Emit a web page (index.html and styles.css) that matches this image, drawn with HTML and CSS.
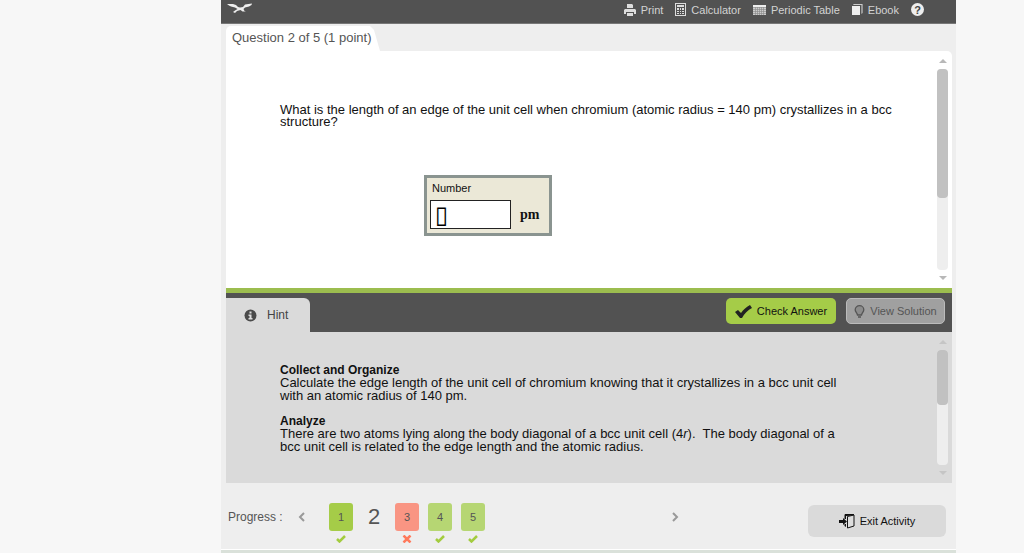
FILE: index.html
```
<!DOCTYPE html>
<html lang="en">
<head>
  <meta charset="UTF-8">
  <title>Question 2 of 5</title>
  <meta name="viewport" content="width=device-width, initial-scale=1">
  <link rel="stylesheet" href="styles.css">
</head>
<body>
  <div class="app">
    <header class="topbar">
      <svg class="logo" width="26" height="10" viewBox="0 0 26 10"><path fill="#eee" d="M0 1 L6 1 L9 2 L11 4 L13 4.500 L16 4 L18 1.500 L25 .5 L24.500 2 L22 3.500 L18 4.500 L16.500 6 L17.500 8 L19 8.500 L15.500 8.500 L13.500 7 L10 8 L8 10 L6 9 L8 7.500 L10.500 6 L8 4.500 L4 3.500 L2 2.500 Z"/></svg>
      <nav class="tools">
        <a href="#">
          <svg width="12" height="12" viewBox="0 0 12 12"><path fill="#ddd" d="M3 0h5l1 1v3H3z M0 6l1-1h10l1 1v4h-2V8H2v2H0z M3 9h6v3H3z"/></svg>
          Print
        </a>
        <a href="#">
          <svg width="11" height="13" viewBox="0 0 11 13"><rect x=".5" y=".5" width="10" height="12" fill="#525252" stroke="#ddd"/><path fill="#ddd" d="M2 2h7v2H2z M2 5h2v2H2z M5 5h1v2H5z M7 5h2v2H7z M2 8h2v1H2z M5 8h1v1H5z M7 8h2v1H7z M2 10h2v1H2z M5 10h1v1H5z M7 10h2v1H7z"/></svg>
          Calculator
        </a>
        <a href="#">
          <svg width="13" height="10" viewBox="0 0 13 10"><rect width="13" height="10" fill="#ccc"/><path fill="#eee" d="M0 0h13v2H0z"/><path stroke="#888" fill="none" stroke-width=".6" d="M0 2.500h13M0 4.500h13M0 6.500h13M0 8.500h13M2.500 2v8M4.500 2v8M6.500 2v8M8.500 2v8M10.500 2v8"/></svg>
          Periodic Table
        </a>
        <a href="#">
          <svg width="11" height="11" viewBox="0 0 11 11"><path fill="#999" d="M1 1l1-1h9v9l-2 1V1z"/><path fill="#eee" d="M0 2h8v9H0z"/><path fill="#ccc" d="M1 1l1-1h8v1z"/></svg>
          Ebook
        </a>
        <a href="#" class="help" aria-label="Help">?</a>
      </nav>
    </header>

    <main>
      <h1 class="question-tab">Question 2 of 5 (1 point)</h1>

      <section class="panel question">
        <div class="question-body">
          <p>What is the length of an edge of the unit cell when chromium (atomic radius = 140 pm) crystallizes in a bcc structure?</p>
          <div class="answer">
            <label for="answer">Number</label>
            <div class="answer-row">
              <input type="text" id="answer" value="&#9647;">
              <span class="unit">pm</span>
            </div>
          </div>
        </div>
        <div class="scroll">
          <span class="arrow up"></span>
          <div class="track"><div class="thumb"></div></div>
          <span class="arrow down"></span>
        </div>
      </section>

      <div class="actions">
        <button type="button" class="hint-tab">
          <svg width="13" height="13" viewBox="0 0 13 13"><circle cx="6.500" cy="6.500" r="6" fill="#4a4a4a"/><path fill="#ddd" d="M5.500 2.500h2v2h-2z M4.500 5.500h3v3.500h1v1.500h-4V9h1V7h-1z"/></svg>
          Hint
        </button>
        <div class="action-buttons">
          <button type="button" class="btn check">
            <svg width="17" height="13" viewBox="0 0 17 13"><path fill="#222" d="M0 7l3-2 3 3c2-3 5-6 9-8l2 3C13 5 9 9 7 13H5z"/></svg>
            Check Answer
          </button>
          <button type="button" class="btn view">
            <svg width="11" height="13" viewBox="0 0 11 13"><path fill="#8c8c8c" stroke="#555" stroke-width="1.300" d="M5.500 .7a4.300 4 0 0 0-4.300 4c0 2 1.800 3 2.300 5.300h4c.5-2.300 2.300-3.300 2.300-5.300a4.300 4 0 0 0-4.300-4z"/><path stroke="#555" stroke-width="1.500" d="M4 12h3"/></svg>
            View Solution
          </button>
        </div>
      </div>

      <section class="panel hint">
        <div class="hint-body">
          <h2>Collect and Organize</h2>
          <p>Calculate the edge length of the unit cell of chromium knowing that it crystallizes in a bcc unit cell with an atomic radius of 140 pm.</p>
          <h2>Analyze</h2>
          <p>There are two atoms lying along the body diagonal of a bcc unit cell (4<i>r</i>).&nbsp; The body diagonal of a bcc unit cell is related to the edge length and the atomic radius.</p>
        </div>
        <div class="scroll">
          <span class="arrow up"></span>
          <div class="track"><div class="thumb"></div></div>
          <span class="arrow down"></span>
        </div>
      </section>
    </main>

    <footer class="footer">
      <span class="progress-label">Progress :</span>
      <button type="button" class="nav-arrow" aria-label="Previous"><svg width="8" height="10" viewBox="0 0 8 10"><path d="M6 1L2 5l4 4" fill="none" stroke="#999" stroke-width="2"/></svg></button>
      <ol class="steps">
        <li>
          <a href="#" class="step done">1</a>
          <svg width="10" height="8" viewBox="0 0 10 8"><path d="M1 4l2.500 2.500L9 1" fill="none" stroke="#a3cc3f" stroke-width="2.500"/></svg>
        </li>
        <li><span class="step current">2</span></li>
        <li>
          <a href="#" class="step wrong">3</a>
          <svg width="10" height="8" viewBox="0 0 10 8"><path d="M1.500 .5l7 7M8.500 .5l-7 7" fill="none" stroke="#ff7a5c" stroke-width="2.500"/></svg>
        </li>
        <li>
          <a href="#" class="step right">4</a>
          <svg width="10" height="8" viewBox="0 0 10 8"><path d="M1 4l2.500 2.500L9 1" fill="none" stroke="#a3cc3f" stroke-width="2.500"/></svg>
        </li>
        <li>
          <a href="#" class="step right">5</a>
          <svg width="10" height="8" viewBox="0 0 10 8"><path d="M1 4l2.500 2.500L9 1" fill="none" stroke="#a3cc3f" stroke-width="2.500"/></svg>
        </li>
      </ol>
      <button type="button" class="nav-arrow next" aria-label="Next"><svg width="8" height="10" viewBox="0 0 8 10"><path d="M2 1l4 4-4 4" fill="none" stroke="#999" stroke-width="2"/></svg></button>
      <button type="button" class="exit">
        <svg width="16" height="15" viewBox="0 0 16 15"><path fill="#111" d="M0 6h4V4l4 3.500-4 3.500V9H0z M6 0h9v1.500l-8 .5V5H5.500V1z M5.500 10H7v3l-1.500-1z"/><path fill="#ddd" stroke="#111" d="M8.500 2.500l6.500-1.500v11l-6.500 2z"/></svg>
        Exit Activity
      </button>
    </footer>
  </div>
</body>
</html>
```
FILE: styles.css
```
* { box-sizing: border-box; }
body {
  margin: 0;
  padding: 0 68px 0 221px;
  background: #f7f7f7;
  font-family: "Liberation Sans", Arial, sans-serif;
  font-size: 13px;
  color: #111;
}
button { font-family: inherit; border: none; cursor: pointer; }
a { color: inherit; text-decoration: none; }
svg { flex: none; }
p, h1, h2, ol { margin: 0; padding: 0; }
.app {
  display: flex;
  flex-direction: column;
  min-height: 100vh;
  background: #eee;
  border-bottom: 3px solid #dae1da;
}

/* top bar */
.topbar {
  display: flex;
  justify-content: space-between;
  align-items: flex-start;
  height: 24px;
  padding: 3px 32px 0 6px;
  background: #525252;
  border-bottom: 1px solid #777;
}
.tools {
  display: flex;
  align-items: center;
  gap: 12px;
  font-size: 11px;
  color: #d2d2d2;
}
.tools a {
  display: flex;
  align-items: center;
  gap: 5px;
}
.tools .help {
  justify-content: center;
  width: 13px;
  height: 13px;
  border-radius: 50%;
  background: #eee;
  color: #444;
  font-weight: bold;
}

/* question */
main { padding: 2px 4px 0 5px; }
.question-tab {
  width: 154px;
  padding: 4px 0 0 6px;
  height: 25px;
  background: #fff;
  border-radius: 5px 0 0 0;
  clip-path: polygon(0 0, 144px 0, 148px 4px, 100% 100%, 0 100%);
  font-size: 13px;
  line-height: 15px;
  font-weight: normal;
  color: #555;
}
.panel {
  display: flex;
  justify-content: space-between;
}
.question {
  background: #fff;
  border-radius: 0 5px 0 0;
  border-bottom: 5px solid #9cbd4f;
}
.question-body {
  max-width: 680px;
  padding: 53px 0 52px 54px;
  line-height: 12px;
}
.answer {
  width: 128px;
  margin: 47px 0 0 144px;
  padding: 4px 3px;
  background: #ebe8d7;
  border: 3px solid #8a9490;
}
.answer label {
  display: block;
  padding-left: 2px;
  margin-bottom: 5px;
  font-size: 11px;
  line-height: 13px;
}
.answer-row {
  display: flex;
  align-items: center;
  gap: 9px;
}
.answer input {
  width: 81px;
  height: 29px;
  padding: 0 4px;
  border: 1px solid #222;
  background: #fff;
  font: 24px "DejaVu Sans", sans-serif;
}
.unit {
  font: bold 14px "Liberation Serif", "Times New Roman", serif;
}

.scroll {
  display: flex;
  flex-direction: column;
  align-items: center;
  gap: 6px;
  width: 11px;
  margin: 8px 4px;
}
.arrow {
  border: 4px solid transparent;
}
.up { border-top: 0; border-bottom-color: #b8b8b8; }
.down { border-bottom: 0; border-top-color: #b8b8b8; }
.track {
  flex: 1;
  width: 100%;
  background: #eee;
  border-radius: 4px;
}
.thumb {
  height: 64%;
  background: #c1c1c1;
  border-radius: 4px;
}

/* action bar */
.actions {
  display: flex;
  justify-content: space-between;
  height: 39px;
  padding: 5px 7px 0 0;
  background: #525252;
}
.hint-tab {
  display: flex;
  align-items: center;
  gap: 10px;
  width: 84px;
  padding: 0 18px;
  background: #dadada;
  border-radius: 0 6px 0 0;
  font-size: 12px;
  color: #444;
}
.action-buttons {
  display: flex;
  gap: 10px;
}
.btn {
  display: flex;
  align-items: center;
  justify-content: center;
  gap: 5px;
  height: 26px;
  border-radius: 5px;
  font-size: 11px;
  white-space: nowrap;
}
.check {
  width: 110px;
  background: #a5cc48;
  color: #111;
}
.view {
  width: 99px;
  background: #a0a0a0;
  border: 1px solid #bbb;
  color: #555;
}

/* hint */
.hint { background: #dadada; }
.hint-body {
  max-width: 614px;
  padding: 32px 0 30px 54px;
  line-height: 13px;
}
.hint-body h2 {
  font-size: 12px;
  line-height: 12px;
}
.hint-body p + h2 { margin-top: 13px; }
.hint .arrow { opacity: .6; }
.hint .thumb { height: 48%; }

/* progress */
.footer {
  flex: 1;
  display: flex;
  align-items: flex-start;
  padding: 20px 10px 4px 7px;
  border-bottom: 1px solid #fff;
}
.progress-label {
  width: 68px;
  padding-top: 7px;
  font-size: 12px;
  color: #555;
}
.nav-arrow {
  width: 12px;
  height: 28px;
  padding: 0;
  background: none;
}
.steps {
  display: flex;
  gap: 9px;
  margin-left: 21px;
  list-style: none;
}
.steps li {
  display: flex;
  flex-direction: column;
  align-items: center;
  gap: 4px;
  width: 24px;
}
.step {
  width: 24px;
  height: 28px;
  border-radius: 3px;
  text-align: center;
  font-size: 11px;
  line-height: 28px;
  color: #555;
}
.done { background: #a5cc48; }
.right { background: #b6d673; }
.wrong { background: #f99583; }
.current { font-size: 22px; }
.next { margin-left: 184px; }
.exit {
  display: flex;
  align-items: center;
  justify-content: center;
  gap: 5px;
  width: 138px;
  height: 32px;
  margin: 2px 0 0 auto;
  background: #dadada;
  border-radius: 6px;
  font-size: 11px;
  color: #111;
}
```
